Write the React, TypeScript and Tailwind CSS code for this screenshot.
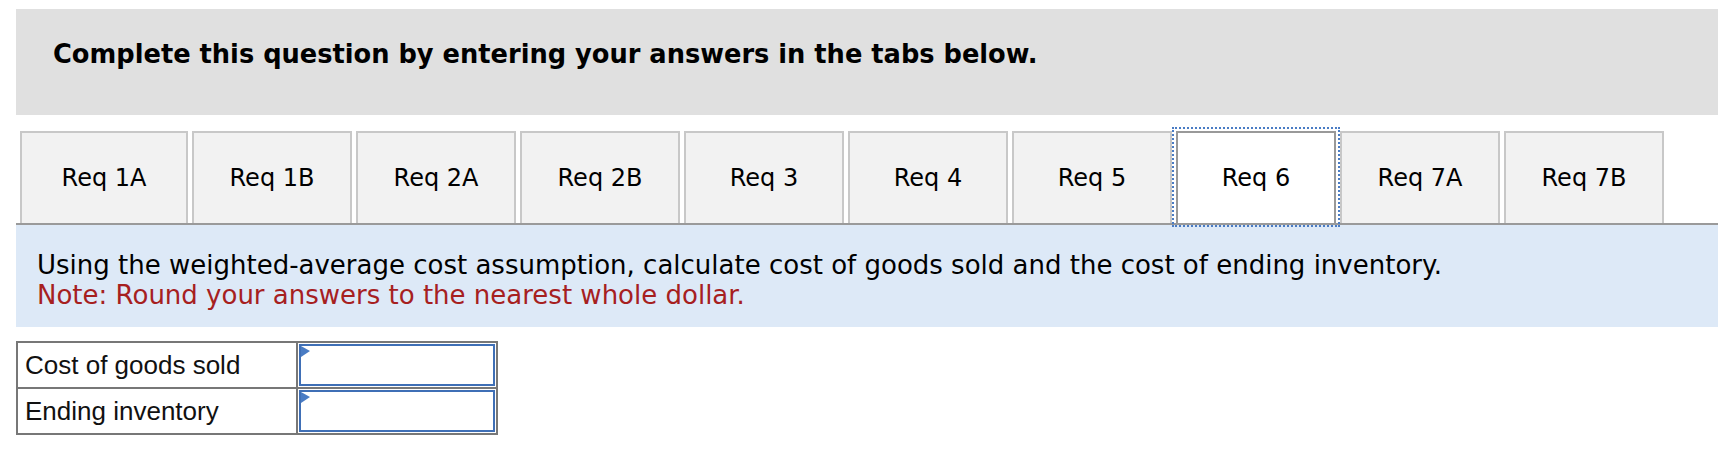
const tabs = ['Req 1A', 'Req 1B', 'Req 2A', 'Req 2B', 'Req 3', 'Req 4', 'Req 5', 'Req 6', 'Req 7A', 'Req 7B']
const activeTab = 'Req 6'

const rows = ['Cost of goods sold', 'Ending inventory']

function Tab({ label, first }: { label: string; first: boolean }) {
  const active = label === activeTab
  return (
    <div
      className={`flex h-[92px] items-center justify-center border-2 border-b-0 text-[24px] text-black ${
        first ? 'w-[168px]' : 'w-[160px]'
      } ${
        active
          ? 'relative z-10 border-[#999999] bg-white outline-2 outline-dotted outline-offset-2 outline-[#4a7cc4]'
          : 'border-[#c8c8c8] bg-[#f2f2f2]'
      }`}
    >
      {label}
    </div>
  )
}

export default function App() {
  return (
    <div className="min-h-[450px] bg-white pl-[16px] pt-[9px] font-['DejaVu_Sans',Verdana,sans-serif]">
      <div className="w-[1702px]">
        <div className="h-[106px] bg-[#e0e0e0] pl-[37px] pt-[29px]">
          <h2 className="text-[25.7px] leading-[32px] font-bold text-black">
            Complete this question by entering your answers in the tabs below.
          </h2>
        </div>

        <div className="mt-[16px] flex gap-[4px] pl-[4px]">
          {tabs.map((t, i) => (
            <Tab key={t} label={t} first={i === 0} />
          ))}
        </div>

        <div className="h-[104px] border-t-2 border-[#9a9a9a] bg-[#dde9f7] pl-[21px] pt-[25px] text-[26px] leading-[30px]">
          <p className="text-black">
            Using the weighted-average cost assumption, calculate cost of goods sold and the cost of ending inventory.
          </p>
          <p className="text-[#a6201f]">Note: Round your answers to the nearest whole dollar.</p>
        </div>

        <table className="mt-[14px] w-[482px] border-collapse border-2 border-[#777777] font-['Liberation_Sans',Arial,sans-serif]">
          <tbody>
            {rows.map((r) => (
              <tr key={r} className="h-[46px]">
                <td className="w-[280px] border-2 border-[#777777] pl-[7px] text-[26px] leading-[30px] text-[#111111]">
                  {r}
                </td>
                <td className="border-2 border-[#777777] p-0">
                  <div className="relative m-[1px] h-[42px] border-2 border-[#3f6fb6] bg-white">
                    <svg className="absolute left-0 top-0" width="10" height="12" viewBox="0 0 10 12">
                      <polygon points="0,0 9,5 0,11" fill="#4a7cc4" />
                    </svg>
                  </div>
                </td>
              </tr>
            ))}
          </tbody>
        </table>
      </div>
    </div>
  )
}
